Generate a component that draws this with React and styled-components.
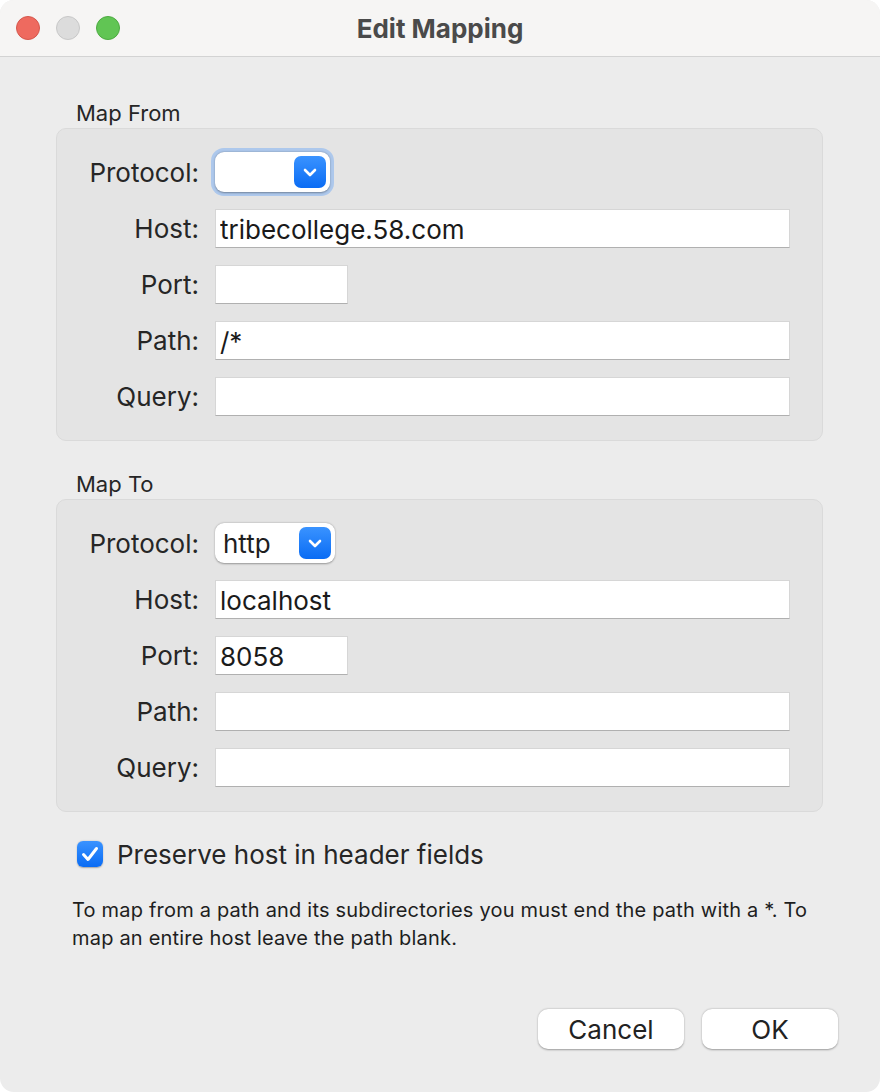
import React, { useState } from "react";
import styled, { createGlobalStyle } from "styled-components";

const GlobalStyle = createGlobalStyle`
    html, body {
        margin: 0;
        padding: 0;
        background: #ffffff;
    }
    body {
        font-family: Inter, "Noto Sans", "Liberation Sans", sans-serif;
        color: #222;
    }
    * {
        box-sizing: border-box;
    }
`;

const fromFields = [
    { label: "Host:", value: "tribecollege.58.com" },
    { label: "Port:", value: "", short: true },
    { label: "Path:", value: "/*" },
    { label: "Query:", value: "" },
];

const toFields = [
    { label: "Host:", value: "localhost" },
    { label: "Port:", value: "8058", short: true },
    { label: "Path:", value: "" },
    { label: "Query:", value: "" },
];

function Chevron() {
    return (
        <svg width="14" height="9" viewBox="0 0 14 9" fill="none">
            <path
                d="M2 2l5 5 5-5"
                stroke="#fff"
                strokeWidth="2.6"
                strokeLinecap="round"
                strokeLinejoin="round"
            />
        </svg>
    );
}

function MappingGroup({ title, protocol, focused, fields }) {
    return (
        <>
            <SectionTitle>{title}</SectionTitle>
            <Group>
                <Label>Protocol:</Label>
                <Popup $focused={focused} $width={focused ? 115 : 120}>
                    <PopupValue>{protocol}</PopupValue>
                    <PopupArrow>
                        <Chevron />
                    </PopupArrow>
                </Popup>
                {fields.map((f) => (
                    <React.Fragment key={f.label}>
                        <Label>{f.label}</Label>
                        <Field $short={f.short} defaultValue={f.value} />
                    </React.Fragment>
                ))}
            </Group>
        </>
    );
}

export default function App() {
    const [preserve, setPreserve] = useState(true);

    return (
        <>
            <GlobalStyle />
            <Window>
                <TitleBar>
                    <Lights>
                        <Light $color="#ee6a5f" $border="#d5574c" />
                        <Light $color="#dcdcdc" $border="#c8c8c8" />
                        <Light $color="#61c554" $border="#4dab41" />
                    </Lights>
                    <Title>Edit Mapping</Title>
                </TitleBar>
                <Body>
                    <MappingGroup
                        title="Map From"
                        protocol=""
                        focused
                        fields={fromFields}
                    />
                    <MappingGroup
                        title="Map To"
                        protocol="http"
                        fields={toFields}
                    />
                    <CheckRow onClick={() => setPreserve(!preserve)}>
                        <CheckBox $checked={preserve}>
                            {preserve && (
                                <svg width="18" height="16" viewBox="0 0 18 16" fill="none">
                                    <path
                                        d="M2.5 8.5l4.5 5 8.5-11"
                                        stroke="#fff"
                                        strokeWidth="3"
                                        strokeLinecap="round"
                                        strokeLinejoin="round"
                                    />
                                </svg>
                            )}
                        </CheckBox>
                        <CheckLabel>Preserve host in header fields</CheckLabel>
                    </CheckRow>
                    <Note>
                        To map from a path and its subdirectories you must end the path with a *. To
                        <br />
                        map an entire host leave the path blank.
                    </Note>
                    <Footer>
                        <Button $width={146}>Cancel</Button>
                        <Button $width={136}>OK</Button>
                    </Footer>
                </Body>
            </Window>
        </>
    );
}

const Window = styled.div`
    width: 880px;
    height: 1092px;
    background: #ececec;
    border-radius: 14px;
    overflow: hidden;
    display: flex;
    flex-direction: column;
`;

const TitleBar = styled.div`
    height: 57px;
    flex-shrink: 0;
    background: #f6f5f4;
    border-bottom: 1px solid #d3d3d3;
    display: flex;
    align-items: center;
    position: relative;
`;

const Lights = styled.div`
    display: flex;
    gap: 16px;
    padding-left: 16px;
`;

const Light = styled.span`
    width: 24px;
    height: 24px;
    border-radius: 50%;
    background: ${(p) => p.$color};
    border: 1px solid ${(p) => p.$border};
`;

const Title = styled.div`
    position: absolute;
    left: 0;
    right: 0;
    text-align: center;
    font-size: 26px;
    font-weight: 700;
    color: #4a4a4a;
    pointer-events: none;
`;

const Body = styled.div`
    flex: 1;
    display: flex;
    flex-direction: column;
    padding: 0 42px 0 56px;
`;

const SectionTitle = styled.div`
    font-size: 22px;
    line-height: 24px;
    color: #262626;
    padding-left: 20px;
    margin: 44px 0 3px;

    & + div + & {
        margin-top: 31px;
    }
`;

const Group = styled.div`
    margin-right: 15px;
    background: #e4e4e4;
    border: 1px solid #dadada;
    border-radius: 10px;
    display: grid;
    grid-template-columns: 142px 1fr;
    grid-auto-rows: 40px;
    column-gap: 16px;
    row-gap: 16px;
    align-items: center;
    padding: 23px 32px 24px 0;
`;

const Label = styled.div`
    font-size: 26px;
    color: #262626;
    text-align: right;
`;

const Popup = styled.div`
    width: ${(p) => p.$width}px;
    height: 40px;
    background: #fff;
    border-radius: 9px;
    box-shadow: 0 0.5px 2px rgba(0, 0, 0, 0.35)
        ${(p) => (p.$focused ? ", 0 0 0 4px #adc8ec" : "")};
    display: flex;
    align-items: center;
    justify-content: space-between;
    padding: 0 4px 0 8px;
`;

const PopupValue = styled.span`
    font-size: 26px;
    color: #1e1e1e;
`;

const PopupArrow = styled.span`
    width: 32px;
    height: 32px;
    border-radius: 7px;
    background: linear-gradient(#3a93ff, #0a6cf4);
    display: flex;
    align-items: center;
    justify-content: center;
`;

const Field = styled.input`
    width: ${(p) => (p.$short ? "133px" : "100%")};
    height: 39px;
    background: #fff;
    border: 1px solid #d6d6d6;
    border-bottom-color: #b0b0b0;
    border-radius: 0;
    outline: none;
    padding: 2px 4px 0;
    font-family: inherit;
    font-size: 26px;
    color: #1a1a1a;
`;

const CheckRow = styled.label`
    display: flex;
    align-items: center;
    gap: 14px;
    margin: 26px 0 0 21px;
    height: 32px;
    cursor: default;
`;

const CheckBox = styled.span`
    width: 26px;
    height: 26px;
    border-radius: 6px;
    background: ${(p) =>
        p.$checked ? "linear-gradient(#3a93ff, #0a6cf4)" : "#fff"};
    box-shadow: 0 0.5px 1.5px rgba(0, 0, 0, 0.3);
    display: flex;
    align-items: center;
    justify-content: center;
`;

const CheckLabel = styled.span`
    font-size: 26px;
    color: #262626;
`;

const Note = styled.p`
    margin: 26px 0 0 16px;
    font-size: 20px;
    letter-spacing: 0.2px;
    line-height: 28px;
    color: #1e1e1e;
    white-space: nowrap;
`;

const Footer = styled.div`
    display: flex;
    justify-content: flex-end;
    gap: 18px;
    margin-top: 57px;
`;

const Button = styled.button`
    width: ${(p) => p.$width}px;
    height: 40px;
    background: #fff;
    border: none;
    border-radius: 10px;
    box-shadow: 0 0.5px 2px rgba(0, 0, 0, 0.35);
    font-family: inherit;
    font-size: 26px;
    color: #222;
`;
